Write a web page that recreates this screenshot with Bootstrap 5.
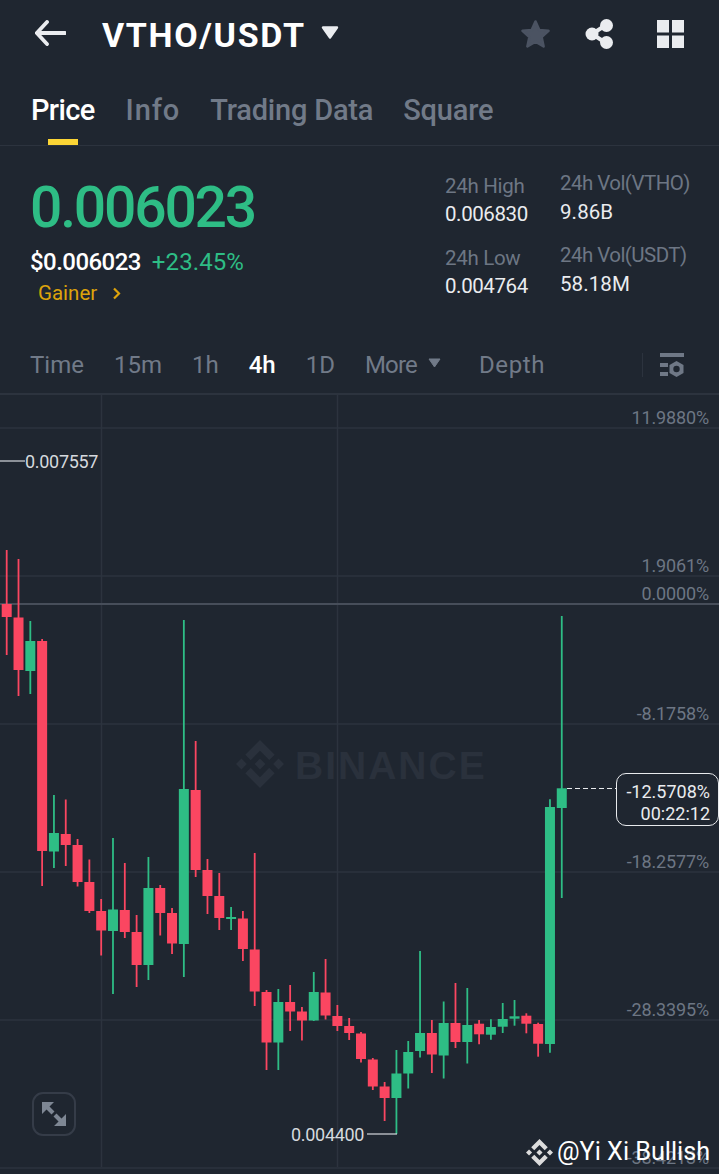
<!DOCTYPE html>
<html lang="en">
<head>
<meta charset="utf-8">
<title>VTHO/USDT</title>
<link rel="stylesheet" href="https://cdn.jsdelivr.net/npm/bootstrap@5.3.0/dist/css/bootstrap.min.css">
<style>
:root{--bgc:#1f2630;--line:#2c333e;--muted:#6d7684;--tab:#717a88;--fg:#eaecef;--up:#2ebd85;--down:#fb4661;}
html,body{background:var(--bgc);margin:0;}
body{width:719px;height:1174px;overflow:hidden;font-family:Roboto,"Liberation Sans",sans-serif;color:var(--fg);}
.top-bar{height:68px;padding:0 35px;}
.i-back{margin-top:-2px;}
.pair{font-size:34px;font-weight:700;letter-spacing:1.65px;line-height:40px;margin:2px 0 0 36px;color:#fff;}
.pair-caret{margin-left:15px;margin-top:-4px;}
.top-icons{gap:34px;}
.top-icons .i-share{margin-right:9px;}
.tab-row{height:78px;padding:24px 0 0 31px;gap:30px;border-bottom:1px solid var(--line);}
.tab-item{font-size:29px;line-height:36px;color:var(--tab);font-weight:500;position:relative;letter-spacing:-.2px;}
.tab-item.on{color:#fff;letter-spacing:-.65px;}
.tab-item.tab-wide{letter-spacing:.9px;margin-left:1px;}
.tab-item.on::after{content:"";position:absolute;left:17px;top:47px;width:30px;height:6px;background:#fcd535;}
.quote-area{height:200px;padding-left:31px;}
.q-left{width:414px;padding-top:32px;}
.q-price{font-size:57px;line-height:60px;font-weight:500;color:var(--up);letter-spacing:-2.2px;margin-left:-1px;}
.q-sub{margin-top:9px;line-height:30px;font-size:24px;gap:11px;}
.q-usd{font-weight:500;color:#fff;letter-spacing:-.55px;margin-left:-1px;}
.q-pct{color:var(--up);letter-spacing:.1px;}
.q-gain{margin:3px 0 0 7px;line-height:26px;font-size:20.5px;color:#dda30b;gap:15px;}
.q-col{line-height:28px;font-size:20.5px;}
.q-col.c1{width:115px;padding-top:26px;}
.q-col.c1 .lbl{letter-spacing:-.3px;}
.q-col.c1 .val{letter-spacing:-.4px;}
.q-col.c2{padding-top:23px;}
.q-col.c2 .lbl{letter-spacing:-.55px;}
.q-col .lbl{color:var(--muted);}
.q-col .val{color:#eaecef;}
.q-col .gap1{margin-top:16px;}
.q-col.c2 .val{margin-top:1px;letter-spacing:.1px;}
.q-col.c2 .gap1{margin-top:15px;}
.itv-row{height:49px;padding:0 35px 9px 30px;border-bottom:2px solid var(--line);font-size:24px;color:var(--tab);gap:30px;}
.itv-row .on{color:#fff;font-weight:500;}
.itv-more{gap:11px;letter-spacing:-.8px;}
.itv-depth{letter-spacing:.6px;}
.itv-tools{gap:17px;}
.itv-sep{width:1px;height:24px;background:var(--line);}
.chart-area{position:relative;height:779px;}
.chart-area svg.plot{display:block;}
.ax{font:400 18px Roboto,"Liberation Sans",sans-serif;fill:#6d7684;text-anchor:end;letter-spacing:-.15px;}
.ext{font:400 18px Roboto,"Liberation Sans",sans-serif;fill:#d5d9de;letter-spacing:-.3px;}
.wm{font:700 39px "Liberation Sans",Roboto,sans-serif;fill:#2a313c;letter-spacing:2px;}
.px-tag{position:absolute;left:616px;top:378px;width:103px;height:53px;border:1px solid #e8eaed;border-radius:10px;background:var(--bgc);font-size:18px;line-height:22px;text-align:right;padding:7px 8px 0 0;color:#eaecef;}
.expand-btn{position:absolute;left:32px;top:697px;width:44px;height:44px;border:2px solid #353c48;border-radius:11px;padding:0;display:flex;align-items:center;justify-content:center;}
.credit{position:absolute;left:526px;top:741px;gap:4px;font-size:25.2px;line-height:32px;color:#fff;white-space:nowrap;}
</style>
</head>
<body>
<div class="top-bar d-flex align-items-center">
  <svg width="31" height="26" viewBox="0 0 31 26" class="i-back"><path d="M12 2 1.800 13 12 24M2.500 13H30" fill="none" stroke="#eaecef" stroke-width="3.800" stroke-linecap="round" stroke-linejoin="round"/></svg>
  <div class="pair">VTHO/USDT</div>
  <svg class="pair-caret" width="18" height="13" viewBox="0 0 18 13"><path d="M2 1.500h14L9 11.500z" fill="#eaecef" stroke="#eaecef" stroke-width="2.400" stroke-linejoin="round"/></svg>
  <div class="top-icons d-flex align-items-center ms-auto">
    <svg class="i-star" width="31" height="30" viewBox="0 0 31 30"><path d="M15.500 2.500 19.300 11l9.200.9-6.900 6.200 2 9.300-8.100-4.800-8.100 4.800 2-9.300-6.900-6.200 9.200-.9z" fill="#4b5362" stroke="#4b5362" stroke-width="2.600" stroke-linejoin="round"/></svg>
    <svg class="i-share" width="29" height="30" viewBox="0 0 29 30"><path d="M21 6 7 15l14 9" fill="none" stroke="#eaecef" stroke-width="4"/><circle cx="21.500" cy="6.500" r="6.500" fill="#eaecef"/><circle cx="7" cy="15" r="6.500" fill="#eaecef"/><circle cx="21.500" cy="23.500" r="6.500" fill="#eaecef"/></svg>
    <svg width="27" height="28" viewBox="0 0 27 28"><path d="M0 0h12v12.500H0zM15 0h12v12.500H15zM0 15.500h12V28H0zM15 15.500h12V28H15z" fill="#eaecef"/></svg>
  </div>
</div>

<div class="tab-row d-flex align-items-start">
  <div class="tab-item on">Price</div>
  <div class="tab-item tab-wide">Info</div>
  <div class="tab-item">Trading Data</div>
  <div class="tab-item">Square</div>
</div>

<div class="quote-area d-flex">
  <div class="q-left">
    <div class="q-price">0.006023</div>
    <div class="q-sub d-flex"><span class="q-usd">$0.006023</span><span class="q-pct">+23.45%</span></div>
    <div class="q-gain d-flex align-items-center"><span>Gainer</span><svg width="9" height="13" viewBox="0 0 9 13"><path d="M2 1.500 7 6.500 2 11.500" fill="none" stroke="#dda30b" stroke-width="2.200"/></svg></div>
  </div>
  <div class="q-col c1">
    <div class="lbl">24h High</div><div class="val">0.006830</div>
    <div class="lbl gap1">24h Low</div><div class="val">0.004764</div>
  </div>
  <div class="q-col c2">
    <div class="lbl">24h Vol(VTHO)</div><div class="val">9.86B</div>
    <div class="lbl gap1">24h Vol(USDT)</div><div class="val">58.18M</div>
  </div>
</div>

<div class="itv-row d-flex align-items-center">
  <span>Time</span><span>15m</span><span>1h</span><span class="on">4h</span><span>1D</span>
  <span class="itv-more d-inline-flex align-items-center"><span>More</span><svg width="13" height="10" viewBox="0 0 13 10" class="mb-1"><path d="M1 1h11L6.500 9z" fill="#717a88" stroke="#717a88" stroke-linejoin="round"/></svg></span>
  <span class="ms-2 itv-depth">Depth</span>
  <span class="itv-tools d-flex align-items-center ms-auto">
    <span class="itv-sep"></span>
    <svg width="24" height="24" viewBox="0 0 24 24"><path d="M0 0h24v4H0zM0 10h8v4H0zM0 19h8v4H0z" fill="#6f7886"/><path d="M16.500 8l7 4v8l-7 4-7-4v-8z" fill="#6f7886"/><circle cx="16.500" cy="16" r="3.200" fill="#1f2630"/></svg>
  </span>
</div>

<div class="chart-area">
  <svg class="plot" id="plot" width="719" height="779" viewBox="0 395 719 779" xmlns="http://www.w3.org/2000/svg">
    <g stroke="#2c333e" stroke-width="1.500">
      <path d="M0 428H719M0 576H719M0 724H719M0 872H719M0 1020H719M0 1168H719M101.500 394V1167M337.500 394V1167" fill="none"/>
    </g>
    <path d="M0 604H719" stroke="#474e5a" stroke-width="2"/>
    <g fill="#2a313c" transform="translate(236 740) scale(2)">
      <path d="M16.624 13.920l2.718 2.715-7.353 7.353-7.353-7.352 2.718-2.716 4.635 4.659 4.636-4.659zm4.637-4.636L24 12l-2.715 2.716L18.568 12l2.693-2.716zm-9.272.001l2.716 2.691-2.716 2.718v-.001L9.272 12l2.717-2.715zm-9.272-.001L5.409 12l-2.692 2.692L0 12l2.717-2.716zM11.989.012l7.353 7.329-2.718 2.715-4.635-4.636-4.636 4.660-2.717-2.716 7.353-7.352z"/>
    </g>
    <text class="wm" x="295" y="779">BINANCE</text>
    <g id="candles"></g>
    <text class="ax" x="709" y="424">11.9880%</text>
    <text class="ax" x="709" y="572">1.9061%</text>
    <text class="ax" x="709" y="600">0.0000%</text>
    <text class="ax" x="709" y="720">-8.1758%</text>
    <text class="ax" x="709" y="868">-18.2577%</text>
    <text class="ax" x="709" y="1016">-28.3395%</text>
    <text class="ax" x="709" y="1164">-38.4213%</text>
    <path d="M0 461H25" stroke="#d5d9de" stroke-width="1.200"/>
    <text class="ext" x="25" y="468">0.007557</text>
    <text class="ext" x="291" y="1141">0.004400</text>
    <path d="M367 1134H397" stroke="#d5d9de" stroke-width="1.200"/>
    <path d="M567 788.500H616" stroke="#e8eaed" stroke-width="1.200" stroke-dasharray="5 3"/>
  </svg>
  <div class="px-tag"><div>-12.5708%</div><div>00:22:12</div></div>
  <button type="button" class="expand-btn btn" aria-label="Expand">
    <svg width="26" height="26" viewBox="0 0 26 26"><path d="M1 1h12L1 13zM25 25H13l12-12z" fill="#7e8794"/><path d="M5 5l7 7M14 14l7 7" stroke="#7e8794" stroke-width="4.200"/></svg>
  </button>
  <div class="credit d-flex align-items-center">
    <svg width="27" height="27" viewBox="0 0 24 24"><path fill="#dcdcdc" d="M16.624 13.920l2.718 2.715-7.353 7.353-7.353-7.352 2.718-2.716 4.635 4.659 4.636-4.659zm4.637-4.636L24 12l-2.715 2.716L18.568 12l2.693-2.716zm-9.272.001l2.716 2.691-2.716 2.718v-.001L9.272 12l2.717-2.715zm-9.272-.001L5.409 12l-2.692 2.692L0 12l2.717-2.716zM11.989.012l7.353 7.329-2.718 2.715-4.635-4.636-4.636 4.660-2.717-2.716 7.353-7.352z"/></svg>
    <span>@Yi Xi Bullish</span>
  </div>
</div>

<script src="https://cdn.jsdelivr.net/npm/bootstrap@5.3.0/dist/js/bootstrap.bundle.min.js"></script>
<script>
// 0 = red, 1 = green: [dir, wickTop, wickBottom, bodyTop, bodyBottom]
var data=[[0,550,655,604,617],[0,559,696,617.5,670],[1,621,694,641,671],[0,639,886,641,851],[1,795,868,833,851.5],[0,799.5,866,834,845],[0,839,886.5,845,882],[0,859.5,913,882,911],[0,899,955.5,911,930.5],[1,838,994,909.5,931],[0,863,938,910,932],[0,915,987,932,965],[1,857,980,888,965],[0,885,935.5,888,913],[0,908,954,913,943.5],[1,620,977,789,944],[0,741,877,790,870],[0,859,914,870,896],[0,873,930,896,918],[1,907,930,917,919],[0,911,961,918.5,949],[0,853,1006,949.5,991.5],[0,990,1070,992,1042.5],[1,989,1070,1002,1042.5],[0,985,1031,1002,1011.5],[0,1007,1040.5,1011.5,1020.5],[1,972,1021,992,1020.5],[0,959,1019.5,992.5,1015.5],[0,1005,1031,1016,1026],[0,1018,1040,1026,1033],[0,1032,1062.5,1033.5,1059],[0,1058,1090,1059.5,1086.5],[0,1082,1121,1086.5,1098],[1,1050,1134,1073.5,1098],[1,1041,1088.5,1052,1073.5],[1,951,1057.5,1033,1051],[0,1020,1073,1033,1054.5],[1,1001.5,1078.5,1023,1055.5],[0,983,1048,1023,1042],[1,988,1063.5,1025,1042],[0,1020,1044.3,1023.7,1034.3],[1,1019.3,1039.7,1027,1034.7],[1,1003,1033,1019,1026.7],[1,1000,1025.7,1016.3,1018.7],[0,1013.3,1033.3,1015.7,1023.7],[0,1022.7,1056.7,1024,1043.7],[1,799.3,1052.7,807,1044],[1,616,898,788.3,808]];
var g=document.getElementById('candles'),ns='http://www.w3.org/2000/svg';
data.forEach(function(c,i){
  var x=6.7+11.81*i,col=c[0]?'#2ebd85':'#fb4661';
  var l=document.createElementNS(ns,'line');
  l.setAttribute('x1',x);l.setAttribute('x2',x);l.setAttribute('y1',c[1]);l.setAttribute('y2',c[2]);
  l.setAttribute('stroke',col);l.setAttribute('stroke-width','1.8');g.appendChild(l);
  var r=document.createElementNS(ns,'rect');
  r.setAttribute('x',x-5);r.setAttribute('y',c[3]);r.setAttribute('width','10');r.setAttribute('height',c[4]-c[3]);
  r.setAttribute('fill',col);g.appendChild(r);
});
</script>
</body>
</html>
